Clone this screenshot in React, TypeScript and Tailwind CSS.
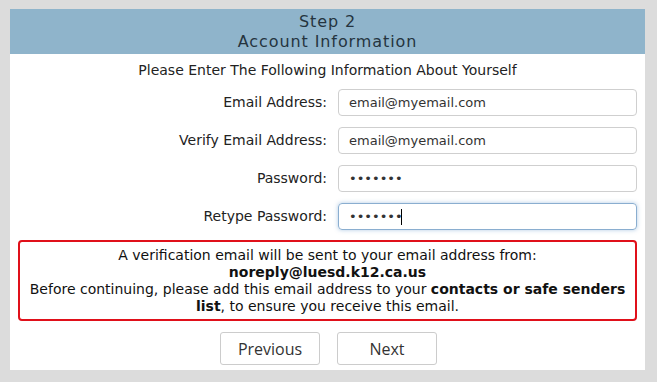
export default function App() {
  const rows = [
    { label: "Email Address:", value: "email@myemail.com", type: "text" },
    { label: "Verify Email Address:", value: "email@myemail.com", type: "text" },
    { label: "Password:", value: "1234567", type: "password" },
    { label: "Retype Password:", value: "1234567", type: "password", focus: true },
  ];
  return (
    <div className="w-[657px] h-[382px] bg-[#dcdcdc] pt-[9px] pl-[10px] font-['DejaVu_Sans',sans-serif]">
      <div className="w-[635px] h-[361px] bg-white flex flex-col">
        <div className="h-[45px] bg-[#8fb4cb] flex flex-col items-center justify-center text-[16px] leading-[20px] text-[#25343f] tracking-[0.9px]">
          <div>Step 2</div>
          <div>Account Information</div>
        </div>
        <div className="h-[29px] pt-[7px] text-center text-[14px] text-[#222] leading-[18px]">
          Please Enter The Following Information About Yourself
        </div>
        <div className="flex flex-col">
          {rows.map((r) => (
            <div key={r.label} className="flex items-center h-[38px]">
              <label className="w-[328px] text-right text-[14px] text-[#222] pr-[11px]">{r.label}</label>
              <div className="relative">
                <input
                  type={r.type}
                  defaultValue={r.value}
                  className={
                    "w-[299px] h-[27px] rounded-[4px] border px-[10px] text-[13px] text-[#333] outline-none font-['DejaVu_Sans',sans-serif] " +
                    (r.focus
                      ? "border-[#8aaed0] shadow-[0_0_4px_rgba(102,153,204,0.5)]"
                      : "border-[#cfcfcf]")
                  }
                />
                {r.focus && <span className="absolute left-[63px] top-[6px] w-px h-[16px] bg-black" />}
              </div>
            </div>
          ))}
        </div>
        <div className="mt-[5px] ml-[8px] w-[619px] border-2 border-[#e0101a] rounded-[4px] pt-[5px] pb-[4px] px-[6px] text-center text-[14px] leading-[17px] text-[#111]">
          <div>A verification email will be sent to your email address from:</div>
          <div className="font-bold">noreply@luesd.k12.ca.us</div>
          <div>
            Before continuing, please add this email address to your{" "}
            <span className="font-bold">contacts or safe senders list</span>, to ensure you receive this email.
          </div>
        </div>
        <div className="flex justify-center gap-[17px] mt-[11px] pl-[2px]">
          <button className="w-[100px] h-[33px] border border-[#cccccc] rounded-[3px] bg-white text-[16px] text-[#333] font-['Open_Sans',sans-serif]">
            Previous
          </button>
          <button className="w-[100px] h-[33px] border border-[#cccccc] rounded-[3px] bg-white text-[16px] text-[#333] font-['Open_Sans',sans-serif]">
            Next
          </button>
        </div>
      </div>
    </div>
  );
}
